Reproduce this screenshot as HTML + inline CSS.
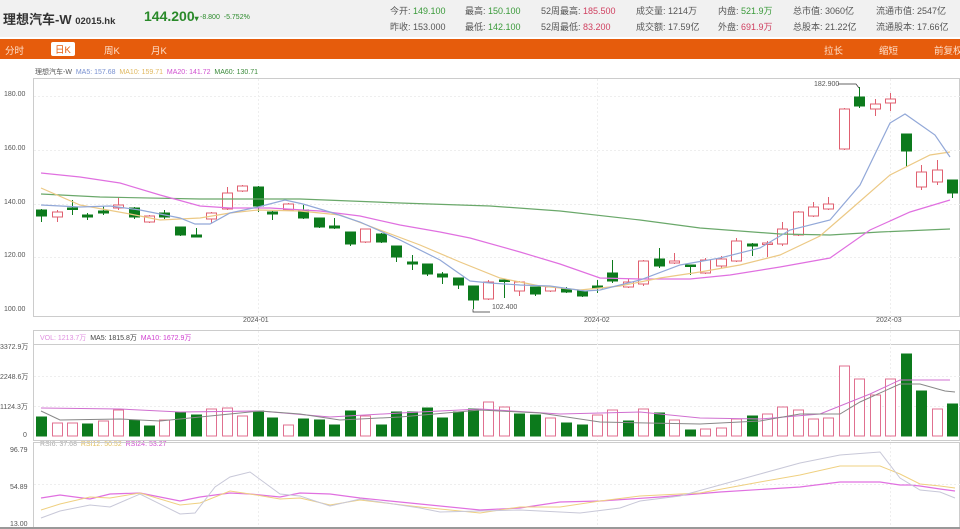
<!DOCTYPE html>
<html><head><meta charset="utf-8"><style>
body{margin:0;width:960px;height:529px;overflow:hidden;background:#fff;font-family:"Liberation Sans","Noto Sans CJK SC",sans-serif;position:relative}
.hd{position:absolute;left:0;top:0;width:960px;height:37px;background:#f1f1f1}
.t{position:absolute;white-space:nowrap;font-size:9px;color:#555}
.bar{position:absolute;left:0;top:39px;width:960px;height:20px;background:#e65c0c}
.bar span{position:absolute;top:4px;font-size:9.5px;color:#fde0cc;white-space:nowrap}
</style></head><body>
<div class="hd"></div>
<div class="t" style="left:3px;top:9px;font-size:13px;font-weight:bold;color:#333">理想汽车-W <span style="font-size:9.5px">02015.hk</span></div>
<div class="t" style="left:144px;top:8px;font-size:14px;font-weight:bold;color:#2a8a2a">144.200<span style="font-size:8px">▾</span></div>
<div class="t" style="left:200px;top:14px;font-size:7px;color:#2a8a2a">-8.800 &nbsp;-5.752%</div>
<div class="t" style="left:390px;top:4px">今开: <span style="color:#3a9a3a">149.100</span></div>
<div class="t" style="left:390px;top:20px">昨收: 153.000</div>
<div class="t" style="left:465px;top:4px">最高: <span style="color:#3a9a3a">150.100</span></div>
<div class="t" style="left:465px;top:20px">最低: <span style="color:#3a9a3a">142.100</span></div>
<div class="t" style="left:541px;top:4px">52周最高: <span style="color:#d04060">185.500</span></div>
<div class="t" style="left:541px;top:20px">52周最低: <span style="color:#d04060">83.200</span></div>
<div class="t" style="left:636px;top:4px">成交量: 1214万</div>
<div class="t" style="left:636px;top:20px">成交额: 17.59亿</div>
<div class="t" style="left:718px;top:4px">内盘: <span style="color:#3a9a3a">521.9万</span></div>
<div class="t" style="left:718px;top:20px">外盘: <span style="color:#d04060">691.9万</span></div>
<div class="t" style="left:793px;top:4px">总市值: 3060亿</div>
<div class="t" style="left:793px;top:20px">总股本: 21.22亿</div>
<div class="t" style="left:876px;top:4px">流通市值: 2547亿</div>
<div class="t" style="left:876px;top:20px">流通股本: 17.66亿</div>
<div class="bar">
<span style="left:5px">分时</span>
<span style="left:51px;top:3px;background:#fff;color:#e65c0c;padding:0 4px;border-radius:2px">日K</span>
<span style="left:104px">周K</span><span style="left:151px">月K</span>
<span style="left:824px">拉长</span><span style="left:879px">缩短</span><span style="left:934px">前复权</span>
</div>
<div class="t" style="left:35px;top:67px;font-size:7px">理想汽车-W &nbsp;<span style="color:#7890d0">MA5: 157.68</span> &nbsp;<span style="color:#e0b860">MA10: 159.71</span> &nbsp;<span style="color:#d050d0">MA20: 141.72</span> &nbsp;<span style="color:#3a8a3a">MA60: 130.71</span></div>
<div class="t" style="left:4px;top:91px;font-size:7px">180.00</div>
<div class="t" style="left:4px;top:145px;font-size:7px">160.00</div>
<div class="t" style="left:4px;top:199px;font-size:7px">140.00</div>
<div class="t" style="left:4px;top:252px;font-size:7px">120.00</div>
<div class="t" style="left:4px;top:306px;font-size:7px">100.00</div>
<div class="t" style="left:243px;top:317px;font-size:7px">2024-01</div>
<div class="t" style="left:584px;top:317px;font-size:7px">2024-02</div>
<div class="t" style="left:876px;top:317px;font-size:7px">2024-03</div>
<div class="t" style="left:814px;top:81px;font-size:7px">182.900</div>
<div class="t" style="left:492px;top:304px;font-size:7px">102.400</div>
<div class="t" style="left:40px;top:333px;font-size:7px"><span style="color:#e090e0">VOL: 1213.7万</span> &nbsp;<span style="color:#444">MA5: 1815.8万</span> &nbsp;<span style="color:#d040d0">MA10: 1672.9万</span></div>
<div class="t" style="left:0px;top:342px;font-size:7px">3372.9万</div>
<div class="t" style="left:0px;top:372px;font-size:7px">2248.6万</div>
<div class="t" style="left:0px;top:402px;font-size:7px">1124.3万</div>
<div class="t" style="left:23px;top:432px;font-size:7px">0</div>
<div class="t" style="left:40px;top:441px;font-size:7px"><span style="color:#aaa">RSI6: 37.68</span> &nbsp;<span style="color:#e0c060">RSI12: 50.52</span> &nbsp;<span style="color:#d050d0">RSI24: 53.27</span></div>
<div class="t" style="left:10px;top:447px;font-size:7px">96.79</div>
<div class="t" style="left:10px;top:484px;font-size:7px">54.89</div>
<div class="t" style="left:10px;top:521px;font-size:7px">13.00</div>
<svg id="s" width="960" height="529" style="position:absolute;left:0;top:0" xmlns="http://www.w3.org/2000/svg">
<g stroke="#ccc" fill="none">
<rect x="33.5" y="78.5" width="926" height="238"/>
<rect x="33.5" y="330.5" width="926" height="110"/>
<line x1="33" y1="344.5" x2="960" y2="344.5"/>
<rect x="33.5" y="442.5" width="926" height="85"/>
</g>
<g stroke="#eee" stroke-dasharray="2,2">
<line x1="34" y1="96.5" x2="960" y2="96.5"/><line x1="34" y1="150.5" x2="960" y2="150.5"/><line x1="34" y1="204.5" x2="960" y2="204.5"/><line x1="34" y1="257.5" x2="960" y2="257.5"/>
<line x1="34" y1="376.5" x2="960" y2="376.5"/><line x1="34" y1="406.5" x2="960" y2="406.5"/><line x1="34" y1="484.5" x2="960" y2="484.5"/>
<line x1="258.5" y1="79" x2="258.5" y2="527"/><line x1="597.5" y1="79" x2="597.5" y2="527"/><line x1="890.5" y1="79" x2="890.5" y2="527"/>
</g>
<rect x="0" y="527" width="960" height="2" fill="#999"/>
<g stroke="#333" stroke-width="0.7" fill="none"><polyline points="838,84 856,84 859,88"/><polyline points="473,309 473,312 490,312"/></g>
</svg>
<script>
var s=document.getElementById('s'),NS='http://www.w3.org/2000/svg';
function el(t,a){var e=document.createElementNS(NS,t);for(var k in a)e.setAttribute(k,a[k]);s.appendChild(e);return e}
var C=[[41,210,216,209,222,0],[57,212,217,210,222,1],[72,208,209,200,215,0],[87,215,217,213,220,0],[103,211,213,206,215,0],[118,205,208,197,210,1],[134,208,217,207,219,0],[149,216,222,215,223,1],[164,213,217,210,219,0],[180,227,235,227,236,0],[196,235,237,228,237,0],[211,213,219,212,223,1],[227,193,209,187,210,1],[242,186,191,185,192,1],[258,187,206,186,212,0],[272,212,214,210,220,0],[288,204,210,203,211,1],[303,210,218,205,219,0],[319,218,227,218,228,0],[334,226,228,218,229,0],[350,232,244,232,246,0],[365,229,242,229,243,1],[381,234,242,233,243,0],[396,246,257,246,262,0],[412,262,264,255,270,0],[427,264,274,264,276,0],[442,274,277,272,284,0],[458,278,285,278,289,0],[473,286,300,286,309,0],[488,282,299,280,300,1],[504,280,281,280,298,0],[519,282,291,281,296,1],[535,287,294,287,296,0],[550,287,291,286,292,1],[566,289,292,287,293,0],[582,291,296,290,297,0],[597,286,288,280,293,0],[612,273,281,260,283,0],[628,282,287,279,288,1],[643,261,284,260,286,1],[659,259,266,248,268,0],[674,261,263,253,264,1],[690,265,266,265,275,0],[705,260,273,258,274,1],[721,259,266,256,268,1],[736,241,261,238,262,1],[752,244,246,243,256,0],[767,243,244,241,257,1],[782,229,244,222,246,1],[798,212,235,211,236,1],[813,207,216,202,217,1],[828,204,209,197,210,1],[844,109,149,108,150,1],[859,97,106,87,108,0],[875,104,109,99,116,1],[890,99,103,93,111,1],[906,134,151,134,167,0],[921,172,187,165,190,1],[937,170,182,160,185,1],[952,180,193,180,198,0]];
C.forEach(function(c){var col=c[5]?'#e06070':'#0c7a1c';
el('line',{x1:c[0]+.5,x2:c[0]+.5,y1:c[3],y2:c[4],stroke:col,'stroke-width':1});
el('rect',{x:c[0]-4.5,y:c[1],width:10,height:Math.max(1.5,c[2]-c[1]),fill:c[5]?'#fff':col,stroke:col,'stroke-width':1});});
function pl(p,col,w){el('polyline',{points:p,fill:'none',stroke:col,'stroke-width':w||1.2})}
pl('41,194 100,197 200,199 300,199 400,203 490,206 560,211 640,220 700,228 780,234 830,235 880,232 950,229','#6aa86a');
pl('41,173 80,177 120,183 160,195 200,206 230,208 270,208 320,211 360,216 400,225 440,232 470,238 520,252 560,264 600,278 640,279 690,279 730,275 780,267 830,258 870,230 910,212 950,200','#e070e0');
pl('41,188 80,205 130,214 160,220 200,218 230,213 258,210 300,211 340,215 380,230 420,245 460,262 500,278 540,286 580,290 620,286 660,278 700,272 740,265 780,255 820,236 850,210 890,175 930,155 950,152','#ecc985');
pl('41,205 80,207 110,206 140,210 180,218 195,224 210,224 230,213 258,207 285,200 303,204 330,212 360,222 400,240 440,260 470,281 490,283 520,285 550,286 585,291 600,290 640,280 680,265 720,258 760,248 790,230 830,220 860,185 890,123 905,114 935,135 950,157','#92a8d8');
var V=[[41,417,0],[57,423,1],[72,423,1],[87,424,0],[103,421,1],[118,410,1],[134,420,0],[149,426,0],[164,420,1],[180,412,0],[196,415,0],[211,409,1],[227,408,1],[242,416,1],[258,411,0],[272,418,0],[288,425,1],[303,419,0],[319,420,0],[334,425,0],[350,411,0],[365,416,1],[381,425,0],[396,412,0],[412,412,0],[427,408,0],[442,418,0],[458,412,0],[473,409,0],[488,402,1],[504,407,1],[519,414,0],[535,415,0],[550,418,1],[566,423,0],[582,425,0],[597,415,1],[612,410,1],[628,421,0],[643,409,1],[659,413,0],[674,420,1],[690,430,0],[705,429,1],[721,428,1],[736,419,1],[752,416,0],[767,414,1],[782,407,1],[798,410,1],[813,419,1],[828,418,1],[844,366,1],[859,379,1],[875,395,1],[890,379,1],[906,354,0],[921,391,0],[937,409,1],[952,404,0]];
V.forEach(function(v){var col=v[2]?'#e07090':'#0c7a1c';el('rect',{x:v[0]-4.5,y:v[1],width:10,height:436-v[1],fill:v[2]?'#fff':col,stroke:col,'stroke-width':1})});
pl('41,408 120,409 180,412 260,411 330,417 400,413 480,409 560,414 640,412 700,418 760,419 820,414 870,394 900,380 950,380','#d070d0',1);
pl('41,411 60,420 120,419 160,421 220,415 260,411 300,414 340,420 400,417 480,410 540,413 600,422 700,424 760,421 800,414 840,414 860,402 900,384 920,384 945,391 955,392','#888',1);
pl('41,498 60,495 90,499 110,494 140,493 180,501 200,497 230,493 250,494 280,497 300,493 330,494 360,498 420,504 480,510 520,508 560,502 600,501 660,497 720,492 800,487 840,482 880,482 900,485 910,485 920,486 940,489 955,491','#e070e0',1.2);
pl('41,510 60,504 90,497 110,498 140,493 180,505 200,503 230,491 250,494 280,499 300,498 330,505 360,500 420,507 480,513 520,507 560,507 600,501 640,496 700,493 760,482 800,475 840,466 880,466 900,474 920,484 940,486 955,488','#efd080',1);
pl('41,518 60,511 90,505 110,507 140,494 180,514 195,513 215,487 230,477 250,472 280,494 300,496 330,506 360,499 400,505 420,508 440,512 480,511 520,510 580,513 620,508 640,501 680,496 720,485 760,474 800,463 840,455 880,452 900,478 920,490 940,492 955,498','#c8c8d8',1);
</script>
</body></html>
